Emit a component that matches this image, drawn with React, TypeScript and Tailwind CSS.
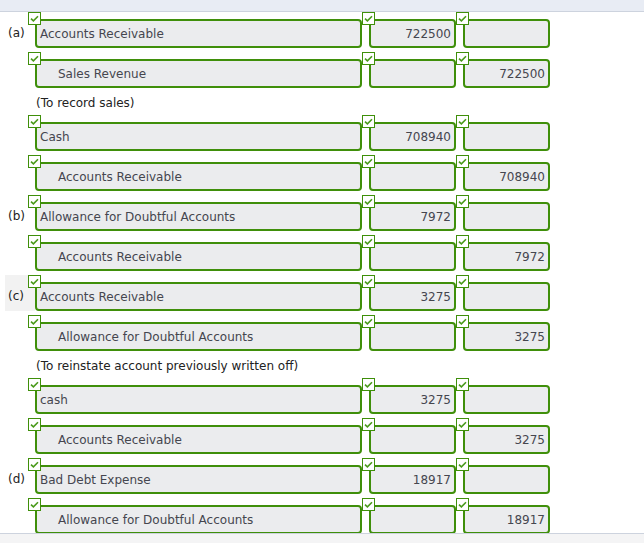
import React from 'react';

type Row =
    | { kind: 'entry'; label?: string; acct: string; indent?: boolean; debit?: string; credit?: string; shade?: boolean }
    | { kind: 'note'; text: string };

const rows: Row[] = [
    { kind: 'entry', label: '(a)', acct: 'Accounts Receivable', debit: '722500' },
    { kind: 'entry', acct: 'Sales Revenue', indent: true, credit: '722500' },
    { kind: 'note', text: '(To record sales)' },
    { kind: 'entry', acct: 'Cash', debit: '708940' },
    { kind: 'entry', acct: 'Accounts Receivable', indent: true, credit: '708940' },
    { kind: 'entry', label: '(b)', acct: 'Allowance for Doubtful Accounts', debit: '7972' },
    { kind: 'entry', acct: 'Accounts Receivable', indent: true, credit: '7972' },
    { kind: 'entry', label: '(c)', acct: 'Accounts Receivable', debit: '3275', shade: true },
    { kind: 'entry', acct: 'Allowance for Doubtful Accounts', indent: true, credit: '3275' },
    { kind: 'note', text: '(To reinstate account previously written off)' },
    { kind: 'entry', acct: 'cash', debit: '3275' },
    { kind: 'entry', acct: 'Accounts Receivable', indent: true, credit: '3275' },
    { kind: 'entry', label: '(d)', acct: 'Bad Debt Expense', debit: '18917' },
    { kind: 'entry', acct: 'Allowance for Doubtful Accounts', indent: true, credit: '18917' },
];

const Check = () => (
    <span className="absolute left-[-7px] top-0 z-10 flex h-[13px] w-[13px] items-center justify-center border border-[#3f8f0a] bg-white">
        <svg width="9" height="7" viewBox="0 0 9 7">
            <path d="M1 3.6 L3.4 5.8 L8 1.2" fill="none" stroke="#4a9a1a" strokeWidth="1.6" />
        </svg>
    </span>
);

const Field: React.FC<{ width: string; value?: string; right?: boolean; indent?: boolean }> = ({ width, value, right, indent }) => (
    <div className={`relative h-[36px] pt-[7px] ${width}`}>
        <Check />
        <div
            className={`flex h-[29px] w-full items-center rounded-[4px] border-2 border-[#3f8f0a] bg-[#ebecee] text-[12px] text-[#45464f] ${
                right ? 'justify-end pr-[3px]' : indent ? 'pl-[21px]' : 'pl-[3px]'
            }`}
        >
            {value}
        </div>
    </div>
);

export default function App() {
    return (
        <div className="h-[543px] w-[644px] overflow-hidden bg-[#f4f4f5]" style={{ fontFamily: '"DejaVu Sans", Verdana, sans-serif' }}>
            <div className="h-[12px] border-b border-[#cdd3de] bg-[#e8ecf4]" />
            <div className="h-[522px] overflow-hidden border-b border-[#cdd3de] bg-white pt-0">
                {rows.map((r, i) =>
                    r.kind === 'note' ? (
                        <div key={i} className="-mt-[1px] mb-[1px] flex h-[23px] items-center pl-[36px] text-[12px] text-[#222]">
                            {r.text}
                        </div>
                    ) : (
                        <div key={i} className="mb-[4px] flex h-[36px]">
                            <div
                                className={`ml-[5px] flex w-[30px] items-center pl-[3px] pt-[5px] text-[12px] text-[#222] ${
                                    r.shade ? 'bg-[#f2f2f2]' : ''
                                }`}
                            >
                                {r.label}
                            </div>
                            <Field width="w-[327px]" value={r.acct} indent={r.indent} />
                            <div className="w-[7px]" />
                            <Field width="w-[87px]" value={r.debit} right />
                            <div className="w-[7px]" />
                            <Field width="w-[87px]" value={r.credit} right />
                        </div>
                    )
                )}
            </div>
        </div>
    );
}
